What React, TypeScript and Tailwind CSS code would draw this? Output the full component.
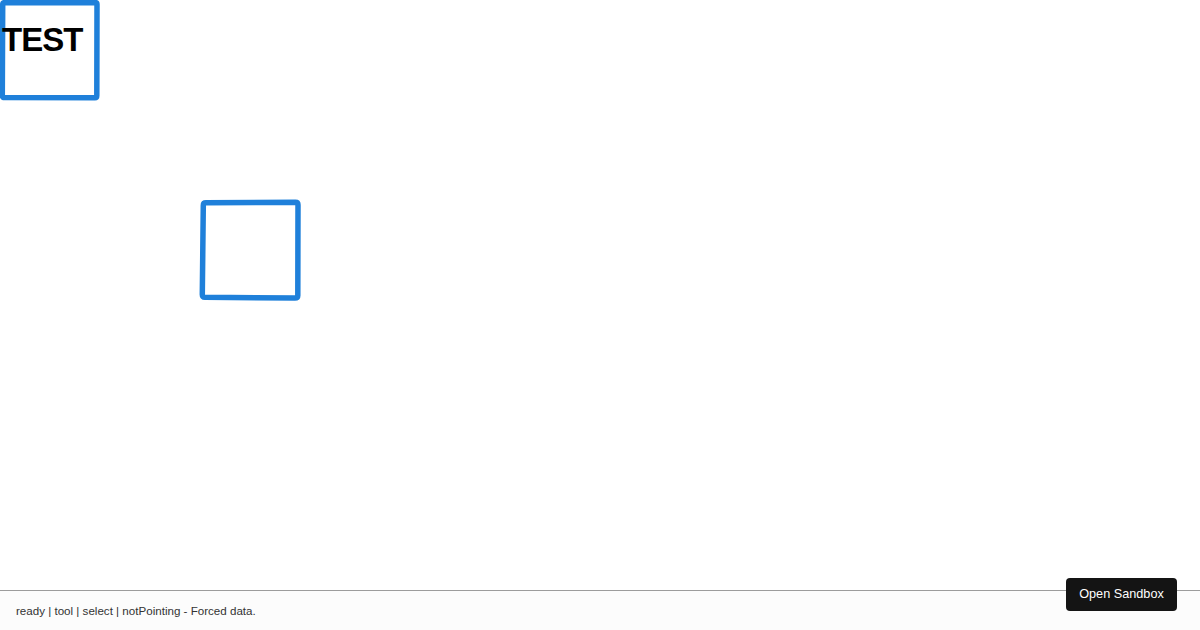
import React from "react";

export default function App() {
  return (
    <div className="relative w-[1200px] h-[630px] bg-white overflow-hidden font-['Liberation_Sans',Arial,sans-serif]">
      <svg className="absolute left-0 top-0" width="1200" height="590" viewBox="0 0 1200 590">
        <path
          d="M4 2.7 Q2.7 2.7 2.7 4.5 L2.3 95 Q2.3 97.5 4.5 97.5 L95 97.8 Q96.8 97.8 96.8 95.5 L97 4.5 Q97 2.5 94.8 2.5 Z"
          fill="none"
          stroke="#1f80da"
          strokeWidth="5.5"
          strokeLinejoin="round"
          strokeLinecap="round"
        />
        <path
          d="M206 202.8 L295.5 202.3 Q298 202.3 298 205 L297.8 295.5 Q297.8 298 295 298 L205 297.3 Q202.3 297.2 202.3 294.5 L203.3 205.5 Q203.3 202.8 206 202.8 Z"
          fill="none"
          stroke="#1f80da"
          strokeWidth="5.5"
          strokeLinejoin="round"
          strokeLinecap="round"
        />
      </svg>
      <div className="absolute left-[2px] top-[20px] text-[33px] leading-[40px] font-bold text-black tracking-[-1px]">
        TEST
      </div>
      <div className="absolute left-0 right-0 bottom-0 h-[40px] border-t border-[#9c9c9c] bg-[#fcfcfc] flex items-center px-4 text-[11.6px] text-[#333]">
        ready | tool | select | notPointing - Forced data.
      </div>
      <button className="absolute left-[1066px] top-[578px] w-[111px] h-[33px] rounded-[4px] bg-[#141414] text-white text-[12.7px] flex items-center justify-center">
        Open Sandbox
      </button>
    </div>
  );
}
